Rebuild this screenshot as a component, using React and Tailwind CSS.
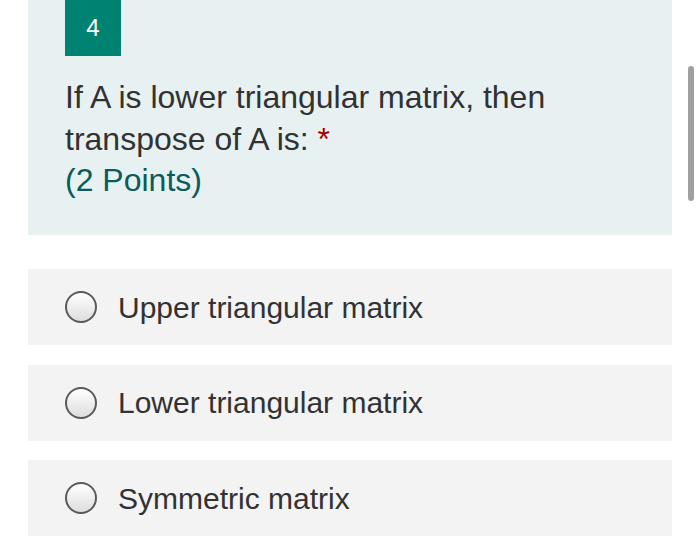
export default function App() {
  const options = ["Upper triangular matrix", "Lower triangular matrix", "Symmetric matrix"];

  return (
    <div
      className="relative w-[700px] h-[547px] bg-white overflow-hidden"
      style={{ fontFamily: '"Liberation Sans", Arial, sans-serif' }}
    >
      <div className="mx-[28px] bg-[#e8f1f2] h-[235px] pl-[37px] pr-[30px]">
        <div className="w-[56px] h-[56px] bg-[#008272] text-white text-[24px] flex items-center justify-center">
          4
        </div>
        <div className="mt-[21px] text-[32px] leading-[41.5px] text-[#323232]">
          <div>If A is lower triangular matrix, then</div>
          <div>
            transpose of A is: <span className="text-[#a80000]">*</span>
          </div>
          <div className="text-[#0b5b5b]">(2 Points)</div>
        </div>
      </div>

      <div className="mt-[34px] flex flex-col gap-[19.5px] mx-[28px]">
        {options.map((o) => (
          <div key={o} className="h-[76px] bg-[#f3f3f3] flex items-center pl-[37px]">
            <span className="w-[32px] h-[32px] rounded-full border-2 border-[#5a5a5a] bg-gradient-to-b from-white to-[#dedede] shrink-0" />
            <span className="ml-[21px] text-[30px] text-[#323232]">{o}</span>
          </div>
        ))}
      </div>

      <div className="absolute left-[688px] top-[66px] w-[6px] h-[135px] rounded-full bg-[#a0a0a0]" />
    </div>
  );
}
